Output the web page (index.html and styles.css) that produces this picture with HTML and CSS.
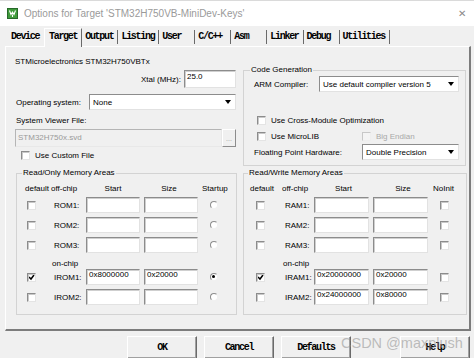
FILE: index.html
```html
<!DOCTYPE html>
<html lang="en">
<head>
    <meta charset="UTF-8">
    <title>Options for Target</title>
    <link rel="stylesheet" href="styles.css">
</head>
<body>
<div class="window">
    <div class="titlebar">
        <svg class="app-icon" width="11" height="11" viewBox="0 0 11 11">
            <rect x="0.5" y="0.5" width="10" height="10" fill="#3f9a3a" stroke="#27692a"/>
            <path d="M2.5 2.5 L4 6.5 L5.5 4 L7 6.5 L8.5 2.5" fill="none" stroke="#fff" stroke-width="1.1"/>
            <path d="M5.5 6.5 V9" stroke="#fff" stroke-width="1.1"/>
        </svg>
        <span class="title">Options for Target 'STM32H750VB-MiniDev-Keys'</span>
        <span class="close">&#10005;</span>
    </div>

    <div class="tabs">
        <span class="tab">Device</span>
        <span class="tab active">Target</span>
        <span class="tab">Output</span>
        <span class="tab">Listing</span>
        <span class="tab">User</span>
        <span class="tab">C/C++</span>
        <span class="tab">Asm</span>
        <span class="tab">Linker</span>
        <span class="tab">Debug</span>
        <span class="tab">Utilities</span>
    </div>

    <div class="panel">
        <div class="top">
            <div class="left-col">
                <div class="devname">STMicroelectronics STM32H750VBTx</div>
                <div class="xtal-row">
                    <span class="lbl">Xtal (MHz):</span>
                    <span class="edit xtal">25.0</span>
                </div>
                <div class="os-row">
                    <span class="lbl os-lbl">Operating system:</span>
                    <span class="combo os"><span>None</span><i class="arrow"></i></span>
                </div>
                <div class="svf-label">System Viewer File:</div>
                <div class="svd-row">
                    <span class="edit disabled svd">STM32H750x.svd</span>
                    <span class="browse">...</span>
                </div>
                <div class="check-row custom"><span class="cb"></span>Use Custom File</div>
            </div>

            <fieldset class="group codegen">
                <legend>Code Generation</legend>
                <div class="cg-row">
                    <span class="lbl arm-lbl">ARM Compiler:</span>
                    <span class="combo arm"><span>Use default compiler version 5</span><i class="arrow"></i></span>
                </div>
                <div class="check-row cross"><span class="cb"></span>Use Cross-Module Optimization</div>
                <div class="check-row micro">
                    <span class="cb"></span><span class="micro-txt">Use MicroLIB</span>
                    <span class="cb off"></span><span class="off-txt">Big Endian</span>
                </div>
                <div class="cg-row fph">
                    <span class="lbl fph-lbl">Floating Point Hardware:</span>
                    <span class="combo fpu"><span>Double Precision</span><i class="arrow"></i></span>
                </div>
            </fieldset>
        </div>

        <div class="mem">
            <fieldset class="group ro">
                <legend>Read/Only Memory Areas</legend>
                <div class="mrow head">
                    <span>default</span><span>off-chip</span><span class="c">Start</span><span class="c">Size</span><span class="startup">Startup</span>
                </div>
                <div class="mrow data">
                    <span class="cb"></span><span class="name">ROM1:</span><span class="edit"></span><span class="edit"></span><span class="radio"></span>
                </div>
                <div class="mrow data">
                    <span class="cb"></span><span class="name">ROM2:</span><span class="edit"></span><span class="edit"></span><span class="radio"></span>
                </div>
                <div class="mrow data">
                    <span class="cb"></span><span class="name">ROM3:</span><span class="edit"></span><span class="edit"></span><span class="radio"></span>
                </div>
                <div class="mrow onchip"><span></span><span>on-chip</span></div>
                <div class="mrow data first">
                    <span class="cb on"></span><span class="name">IROM1:</span><span class="edit">0x8000000</span><span class="edit">0x20000</span><span class="radio on"></span>
                </div>
                <div class="mrow data">
                    <span class="cb"></span><span class="name">IROM2:</span><span class="edit"></span><span class="edit"></span><span class="radio"></span>
                </div>
            </fieldset>

            <fieldset class="group rw">
                <legend>Read/Write Memory Areas</legend>
                <div class="mrow head">
                    <span>default</span><span>off-chip</span><span class="c">Start</span><span class="c">Size</span><span>NoInit</span>
                </div>
                <div class="mrow data">
                    <span class="cb"></span><span class="name">RAM1:</span><span class="edit"></span><span class="edit"></span><span class="cb"></span>
                </div>
                <div class="mrow data">
                    <span class="cb"></span><span class="name">RAM2:</span><span class="edit"></span><span class="edit"></span><span class="cb"></span>
                </div>
                <div class="mrow data">
                    <span class="cb"></span><span class="name">RAM3:</span><span class="edit"></span><span class="edit"></span><span class="cb"></span>
                </div>
                <div class="mrow onchip"><span></span><span>on-chip</span></div>
                <div class="mrow data first">
                    <span class="cb on"></span><span class="name">IRAM1:</span><span class="edit">0x20000000</span><span class="edit">0x20000</span><span class="cb"></span>
                </div>
                <div class="mrow data">
                    <span class="cb"></span><span class="name">IRAM2:</span><span class="edit">0x24000000</span><span class="edit">0x80000</span><span class="cb"></span>
                </div>
            </fieldset>
        </div>
    </div>

    <div class="buttons">
        <span class="btn">OK</span>
        <span class="btn">Cancel</span>
        <span class="btn">Defaults</span>
        <span class="btn help">Help</span>
    </div>

    <div class="watermark">CSDN @maxplush</div>
</div>
</body>
</html>
```

FILE: styles.css
```css
html, body {
    margin: 0;
    padding: 0;
}

body {
    width: 474px;
    height: 358px;
    overflow: hidden;
    background: #f0f0f0;
    font-family: "Liberation Sans", Arial, sans-serif;
    font-size: 8px;
    color: #000;
}

.window {
    position: relative;
    width: 474px;
    height: 358px;
}

/* title bar */
.titlebar {
    height: 26px;
    background: #fff;
    border-top: 1px solid #dadada;
    display: flex;
    align-items: center;
    padding-left: 7px;
    box-sizing: border-box;
}

.app-icon {
    flex: none;
    margin-right: 6px;
}

.title {
    font-size: 10px;
    color: #9a9a9a;
    flex: 1;
}

.close {
    font-size: 10px;
    color: #8a8a8a;
    margin-right: 8px;
}

/* tabs */
.tabs {
    display: flex;
    align-items: flex-end;
    height: 20px;
    padding-left: 8px;
    font-family: "Liberation Mono", "Courier New", monospace;
    font-weight: bold;
    font-size: 10px;
    letter-spacing: -1.3px;
}

.tab {
    height: 14px;
    line-height: 14px;
    margin-bottom: 2px;
    padding: 0 4px 0 3px;
    min-width: 36px;
    box-sizing: border-box;
    border-right: 1px solid #6a6a6a;
}

.tab:first-child {
    border-right: none;
}

.tab.active {
    position: relative;
    height: 19px;
    line-height: 15px;
    margin-bottom: -1px;
    min-width: 38px;
    padding-left: 4px;
    background: #f0f0f0;
    border-left: 1px solid #fff;
    border-top: 1px solid #fff;
    border-right: 1px solid #6a6a6a;
}

/* main tab page */
.panel {
    margin-left: 5px;
    width: 466px;
    height: 285px;
    box-sizing: border-box;
    border-top: 1px solid #fff;
    border-left: 1px solid #fff;
    border-right: 2px solid #7c7c7c;
    border-bottom: 2px solid #7c7c7c;
    padding: 10px 0 0 9px;
}

.top {
    display: flex;
    gap: 6px;
}

.left-col {
    width: 222px;
}

.devname {
    height: 10px;
    line-height: 10px;
}

.lbl {
    white-space: nowrap;
}

.xtal-row {
    margin-top: 3px;
    display: flex;
    justify-content: flex-end;
    align-items: center;
    height: 18px;
}

.xtal-row .lbl {
    margin-right: 3px;
}

.edit {
    display: block;
    box-sizing: border-box;
    background: #fff;
    border: 1px solid;
    border-color: #8c8c8c #e2e2e2 #e2e2e2 #8c8c8c;
    box-shadow: inset 1px 1px 0 #cfcfcf;
    padding: 1px 0 0 2px;
    line-height: 10px;
    white-space: nowrap;
    overflow: hidden;
}

.xtal {
    width: 52px;
    height: 18px;
    margin-right: 1px;
}

.os-row {
    margin-top: 6px;
    display: flex;
    align-items: center;
    height: 16px;
}

.os-lbl {
    width: 73px;
    padding-left: 1px;
}

.combo {
    display: flex;
    align-items: center;
    box-sizing: border-box;
    height: 16px;
    background: #fff;
    border: 1px solid;
    border-color: #8c8c8c #e2e2e2 #e2e2e2 #8c8c8c;
    padding-left: 3px;
}

.combo span {
    flex: 1;
    white-space: nowrap;
}

.arrow {
    width: 0;
    height: 0;
    border-left: 3px solid transparent;
    border-right: 3px solid transparent;
    border-top: 4px solid #000;
    margin-right: 4px;
}

.os {
    width: 147px;
}

.svf-label {
    margin-top: 6px;
    height: 10px;
    line-height: 10px;
    padding-left: 1px;
}

.svd-row {
    margin-top: 3px;
    display: flex;
    height: 18px;
}

.svd {
    width: 207px;
    height: 18px;
}

.edit.disabled {
    background: #f0f0f0;
    color: #9a9a9a;
    border-color: #b5b5b5 #e8e8e8 #e8e8e8 #b5b5b5;
    box-shadow: none;
    padding-top: 3px;
}

.browse {
    width: 14px;
    height: 18px;
    box-sizing: border-box;
    border: 1px solid;
    border-color: #fff #8c8c8c #8c8c8c #fff;
    color: #9a9a9a;
    font-size: 7px;
    text-align: center;
    line-height: 18px;
}

.check-row {
    display: flex;
    align-items: center;
    height: 10px;
}

.custom {
    margin-top: 3px;
    padding-left: 6px;
}

.cb {
    display: block;
    width: 9px;
    height: 9px;
    box-sizing: border-box;
    background: #fff;
    border: 1px solid;
    border-color: #8c8c8c #e4e4e4 #e4e4e4 #8c8c8c;
    box-shadow: inset 1px 1px 0 #c8c8c8;
    margin-right: 5px;
    flex: none;
}

.cb.on {
    background: #fff url("data:image/svg+xml,%3Csvg xmlns='http://www.w3.org/2000/svg' width='7' height='7'%3E%3Cpath d='M1 3 L3 5 L6 1' fill='none' stroke='%23000' stroke-width='1.5'/%3E%3C/svg%3E") no-repeat 0 0;
}

.cb.off {
    background: #f4f4f4;
    border-color: #c8c8c8 #eee #eee #c8c8c8;
    box-shadow: none;
}

.radio {
    display: block;
    width: 8px;
    height: 8px;
    box-sizing: border-box;
    border-radius: 50%;
    border: 1px solid;
    border-color: #8c8c8c #f0f0f0 #f0f0f0 #8c8c8c;
    background: #fff;
    margin-left: 12px;
    position: relative;
}

.radio.on::after {
    content: "";
    position: absolute;
    left: 1px;
    top: 1px;
    width: 3px;
    height: 3px;
    border-radius: 50%;
    background: #000;
}

/* group boxes */
.group {
    margin: 0;
    padding: 0 6px 0 5px;
    border: 1px solid #d3d3d3;
    box-sizing: border-box;
    min-width: 0;
}

.group legend {
    padding: 0 1px;
    line-height: 10px;
    height: 10px;
}

.codegen {
    margin-top: 8px;
    width: 223px;
    height: 101px;
    padding-left: 6px;
}

.cg-row {
    display: flex;
    align-items: center;
    height: 16px;
    margin-top: 1px;
    padding-left: 4px;
}

.arm-lbl {
    width: 65px;
}

.arm {
    width: 140px;
}

.cross {
    margin-top: 23px;
    padding-left: 7px;
}

.micro {
    margin-top: 6px;
    padding-left: 7px;
}

.micro-txt {
    width: 91px;
}

.off-txt {
    color: #a8a8a8;
}

.fph {
    margin-top: 3px;
}

.fph-lbl {
    width: 108px;
}

.fpu {
    width: 97px;
}

/* memory areas */
.mem {
    display: flex;
    gap: 6px;
    margin-top: 2px;
    margin-left: 1px;
}

.ro {
    width: 221px;
    height: 147px;
}

.rw {
    width: 224px;
    height: 147px;
    padding-left: 4px;
}

.mrow {
    display: grid;
    align-items: center;
    margin-top: 4px;
}

.ro .mrow {
    grid-template-columns: 26px 35px 58px 54px 1fr;
    padding-left: 3px;
}

.rw .mrow {
    grid-template-columns: 32px 32px 59px 60px 1fr;
    padding-left: 2px;
}

.mrow.head {
    height: 10px;
    margin-top: 5px;
}

.mrow.head .c {
    text-align: center;
}

.ro .mrow.head .c {
    padding-right: 4px;
}

.ro .startup {
    padding-left: 4px;
}

.mrow.data {
    height: 16px;
}

.mrow.data .edit {
    height: 16px;
    width: 54px;
    padding-top: 0;
}

.rw .mrow.data .edit {
    width: 55px;
}

.mrow .name {
    padding-left: 3px;
}

.ro .mrow .cb {
    margin-left: 2px;
}

.rw .mrow .cb {
    margin-left: 6px;
}

.rw .mrow .cb:last-child {
    margin-left: 7px;
}

.mrow.onchip {
    height: 10px;
    margin-top: 5px;
}

.mrow.onchip span:last-child {
    padding-left: 1px;
}

.mrow.data.first {
    margin-top: 1px;
}

/* dialog buttons */
.buttons {
    display: flex;
    margin-top: 5px;
    padding-left: 127px;
    gap: 7px;
}

.btn {
    width: 70px;
    height: 23px;
    box-sizing: border-box;
    border: 1px solid;
    border-color: #fff #6a6a6a #6a6a6a #fff;
    box-shadow: inset -1px -1px 0 #a0a0a0;
    font-family: "Liberation Mono", "Courier New", monospace;
    font-weight: bold;
    font-size: 10px;
    letter-spacing: -1.3px;
    text-align: center;
    line-height: 21px;
}

.btn.help {
    margin-left: 42px;
}

.watermark {
    position: absolute;
    left: 341px;
    top: 335px;
    font-size: 14.5px;
    color: rgba(150, 150, 150, 0.6);
    white-space: nowrap;
}
```
